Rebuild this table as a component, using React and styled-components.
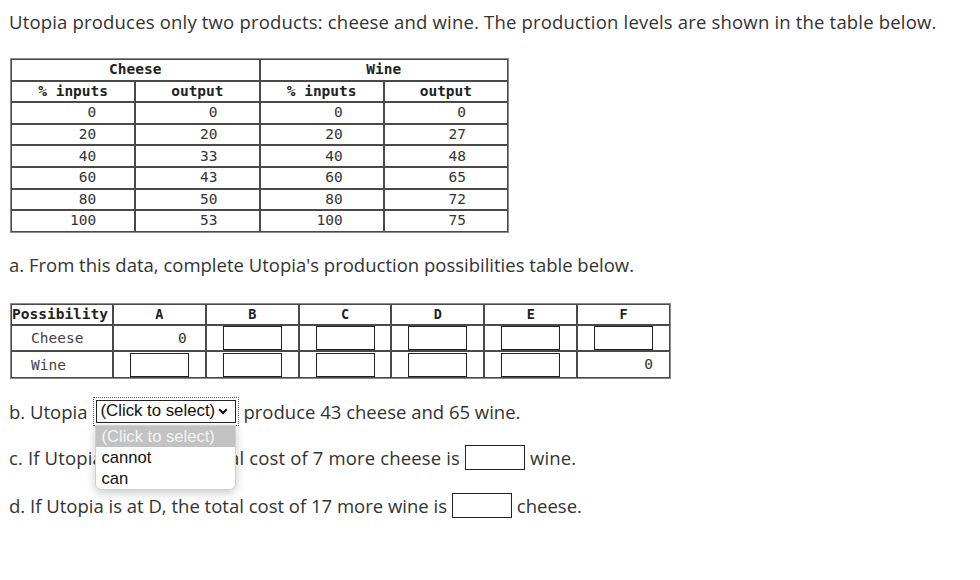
import React from 'react'
import styled, { createGlobalStyle } from 'styled-components'

const GlobalStyle = createGlobalStyle`
  body {
    margin: 0;
    background: #fff;
  }
`

const Page = styled.div`
  padding: 8px 9px;
  font-family: "Open Sans", Lato, sans-serif;
  font-size: 18.5px;
  color: #333;
`
const Line = styled.div`
  display: flex;
  align-items: center;
  height: 26px;
  margin-top: ${props => props.gap || 0}px;
  white-space: pre;
  letter-spacing: ${props => props.spread || 0}px;
`

// production data table
const DataTable = styled.table`
  box-sizing: border-box;
  width: ${props => props.w}px;
  table-layout: fixed;
  border-collapse: separate;
  border-spacing: 0;
  border: 1px solid #8a8a8a;
  margin-left: 1px;
  margin-top: ${props => props.gap || 0}px;
  font-family: "DejaVu Sans Mono", "Liberation Mono", monospace;
  font-size: 14.5px;
  color: #333;
`
const HeadCell = styled.th`
  border: 1px solid #4a4a4a;
  padding: 0;
  height: 19.6px;
  font-weight: bold;
  font-size: ${props => props.small ? '13.5px' : '14.5px'};
  color: #222;
  text-align: ${props => props.left ? 'left' : 'center'};
  line-height: 19px;
`
const NumCell = styled.td`
  border: 1px solid #4a4a4a;
  padding: 0 ${props => props.pr || 40}px 0 0;
  height: ${props => props.h || 19.6}px;
  text-align: right;
  line-height: 19px;
`
const LabelCell = styled.td`
  border: 1px solid #4a4a4a;
  padding: 0 0 0 19px;
  height: ${props => props.h}px;
  color: #444;
`
const InputCell = styled.td`
  border: 1px solid #4a4a4a;
  padding: 0;
  height: ${props => props.h}px;
  text-align: center;
  vertical-align: middle;
`
const Blank = styled.span`
  display: inline-block;
  box-sizing: border-box;
  width: ${props => props.w || 59}px;
  height: ${props => props.h || 24}px;
  border: 1px solid #222;
  background: #fff;
  vertical-align: middle;
`

// select with its open list
const SelectWrap = styled.span`
  position: relative;
  display: inline-block;
  margin: 0 7px 0 9px;
`
const Select = styled.span`
  display: flex;
  align-items: center;
  box-sizing: border-box;
  width: 140px;
  height: 23px;
  padding: 0 0 0 3px;
  border: 1px solid #222;
  outline: 1px dotted #2f6a85;
  outline-offset: 2px;
  font-family: "Liberation Sans", Arial, sans-serif;
  font-size: 16.8px;
  letter-spacing: 0;
  color: #111;
  gap: 3px;
`
const Chevron = styled.svg`
  width: 10px;
  height: 7px;
  margin-top: 1px;
`
const Menu = styled.div`
  position: absolute;
  left: -1px;
  top: 25px;
  width: 141px;
  box-sizing: border-box;
  background: #fff;
  border: 1px solid #d0d0d0;
  border-radius: 0 0 7px 7px;
  box-shadow: 0 3px 10px rgba(0, 0, 0, 0.22);
  overflow: hidden;
  z-index: 2;
  font-family: "Liberation Sans", Arial, sans-serif;
  font-size: 16.6px;
  line-height: 21px;
  letter-spacing: 0;
`
const Option = styled.div`
  padding-left: 5px;
  background: ${props => props.selected ? '#c2c2c2' : '#fff'};
  color: ${props => props.selected ? '#f4f4f4' : '#111'};
`
const Gap = styled.span`
  display: inline-block;
  width: ${props => props.w}px;
`

const production = [
  [0, 0, 0, 0],
  [20, 20, 20, 27],
  [40, 33, 40, 48],
  [60, 43, 60, 65],
  [80, 50, 80, 72],
  [100, 53, 100, 75]
]
const letters = ['A', 'B', 'C', 'D', 'E', 'F']

const App = () => (
  <Page>
    <GlobalStyle />
    <Line spread={0.18}>Utopia produces only two products: cheese and wine. The production levels are shown in the table below.</Line>

    <DataTable w={499} gap={24}>
      <thead>
        <tr>
          <HeadCell colSpan={2}>Cheese</HeadCell>
          <HeadCell colSpan={2}>Wine</HeadCell>
        </tr>
        <tr>
          <HeadCell>% inputs</HeadCell>
          <HeadCell>output</HeadCell>
          <HeadCell>% inputs</HeadCell>
          <HeadCell>output</HeadCell>
        </tr>
      </thead>
      <tbody>
        {production.map((row, i) => (
          <tr key={i}>
            {row.map((v, j) => (
              <NumCell key={j} pr={[38, 41, 40, 41][j]}>{v}</NumCell>
            ))}
          </tr>
        ))}
      </tbody>
    </DataTable>

    <Line gap={19}>a. From this data, complete Utopia's production possibilities table below.</Line>

    <DataTable w={661} gap={25}>
      <colgroup>
        <col style={{ width: 102 }} />
        {letters.map(l => <col key={l} />)}
      </colgroup>
      <thead>
        <tr>
          <HeadCell left>Possibility</HeadCell>
          {letters.map(l => <HeadCell key={l} small>{l}</HeadCell>)}
        </tr>
      </thead>
      <tbody>
        <tr>
          <LabelCell h={24}>Cheese</LabelCell>
          <NumCell h={24} pr={18}>0</NumCell>
          {letters.slice(1).map(l => <InputCell key={l} h={24}><Blank /></InputCell>)}
        </tr>
        <tr>
          <LabelCell h={25}>Wine</LabelCell>
          {letters.slice(0, 5).map(l => <InputCell key={l} h={25}><Blank /></InputCell>)}
          <NumCell h={25} pr={16}>0</NumCell>
        </tr>
      </tbody>
    </DataTable>

    <Line gap={19}>
      b. Utopia
      <SelectWrap>
        <Select>
          (Click to select)
          <Chevron viewBox="0 0 10 7">
            <path d="M1.2 1.2 L5 5 L8.8 1.2" fill="none" stroke="#111" strokeWidth="2" />
          </Chevron>
        </Select>
        <Menu>
          <Option selected>(Click to select)</Option>
          <Option>cannot</Option>
          <Option>can</Option>
        </Menu>
      </SelectWrap>
      produce 43 cheese and 65 wine.
    </Line>

    <Line gap={20} spread={0.15}>
      c. If Utopia is at C, the total cost of 7 more cheese is <Blank w={60} h={25} /><Gap w={5} />wine.
    </Line>

    <Line gap={22}>
      d. If Utopia is at D, the total cost of 17 more wine is <Blank w={60} h={25} /><Gap w={5} />cheese.
    </Line>
  </Page>
)

export default App
